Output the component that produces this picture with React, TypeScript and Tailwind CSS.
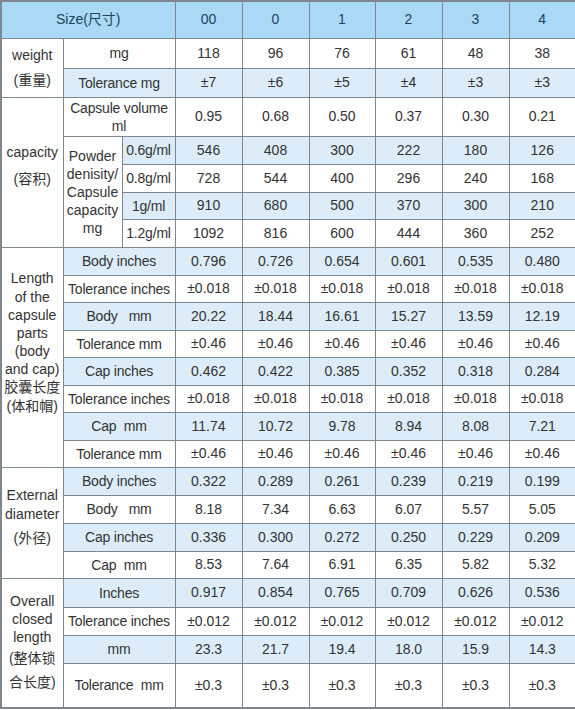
const BLUE = "bg-[#dcedf9]";
const HEAD = "bg-[#a9d9f4]";
const cell = "border border-[#7f878e] text-center align-middle p-0";

type Row = {
  label: string;
  vals: string[];
  blue: boolean;
  h: number;
  span2?: boolean;
  group?: { lines: [string, number][]; rows: number; pb?: number };
  sub?: { lines: string[]; rows: number };
};

function GroupLabel({ lines, pb }: { lines: [string, number][]; pb?: number }) {
  return (
    <div className="flex flex-col items-center" style={{ paddingBottom: pb ?? 0 }}>
      {lines.map(([t, lh], i) => (
        <span key={i} style={{ lineHeight: `${lh}px` }} className="whitespace-nowrap">
          {t}
        </span>
      ))}
    </div>
  );
}

const rows: Row[] = [
  { label: "mg", vals: ["118", "96", "76", "61", "48", "38"], blue: false, h: 30, span2: true, group: { lines: [["weight", 25], ["(重量)", 25]], rows: 2 } },
  { label: "Tolerance mg", vals: ["±7", "±6", "±5", "±4", "±3", "±3"], blue: true, h: 29, span2: true },
  { label: "Capsule volume\nml", vals: ["0.95", "0.68", "0.50", "0.37", "0.30", "0.21"], blue: false, h: 39, span2: true, group: { lines: [["capacity", 27], ["(容积)", 27]], rows: 5, pb: 12 } },
  { label: "0.6g/ml", vals: ["546", "408", "300", "222", "180", "126"], blue: true, h: 28, sub: { lines: ["Powder", "denisity/", "Capsule", "capacity", "mg"], rows: 4 } },
  { label: "0.8g/ml", vals: ["728", "544", "400", "296", "240", "168"], blue: false, h: 28 },
  { label: "1g/ml", vals: ["910", "680", "500", "370", "300", "210"], blue: true, h: 27 },
  { label: "1.2g/ml", vals: ["1092", "816", "600", "444", "360", "252"], blue: false, h: 28 },
  { label: "Body inches", vals: ["0.796", "0.726", "0.654", "0.601", "0.535", "0.480"], blue: true, h: 28, span2: true, group: { lines: [["Length", 19], ["of the", 18], ["capsule", 18], ["parts", 18], ["(body", 18], ["and cap)", 18], ["胶囊长度", 19], ["(体和帽)", 19]], rows: 8, pb: 30 } },
  { label: "Tolerance inches", vals: Array(6).fill("±0.018"), blue: false, h: 27, span2: true },
  { label: "Body   mm", vals: ["20.22", "18.44", "16.61", "15.27", "13.59", "12.19"], blue: true, h: 28, span2: true },
  { label: "Tolerance mm", vals: Array(6).fill("±0.46"), blue: false, h: 27, span2: true },
  { label: "Cap inches", vals: ["0.462", "0.422", "0.385", "0.352", "0.318", "0.284"], blue: true, h: 28, span2: true },
  { label: "Tolerance inches", vals: Array(6).fill("±0.018"), blue: false, h: 27, span2: true },
  { label: "Cap  mm", vals: ["11.74", "10.72", "9.78", "8.94", "8.08", "7.21"], blue: true, h: 28, span2: true },
  { label: "Tolerance mm", vals: Array(6).fill("±0.46"), blue: false, h: 27, span2: true },
  { label: "Body inches", vals: ["0.322", "0.289", "0.261", "0.239", "0.219", "0.199"], blue: true, h: 28, span2: true, group: { lines: [["External", 19], ["diameter", 19], ["(外径)", 28]], rows: 4, pb: 8 } },
  { label: "Body   mm", vals: ["8.18", "7.34", "6.63", "6.07", "5.57", "5.05"], blue: false, h: 28, span2: true },
  { label: "Cap inches", vals: ["0.336", "0.300", "0.272", "0.250", "0.229", "0.209"], blue: true, h: 28, span2: true },
  { label: "Cap  mm", vals: ["8.53", "7.64", "6.91", "6.35", "5.82", "5.32"], blue: false, h: 27, span2: true },
  { label: "Inches", vals: ["0.917", "0.854", "0.765", "0.709", "0.626", "0.536"], blue: true, h: 29, span2: true, group: { lines: [["Overall", 18], ["closed", 18], ["length", 18], ["(整体锁", 24], ["合长度)", 24]], rows: 4 } },
  { label: "Tolerance inches", vals: Array(6).fill("±0.012"), blue: false, h: 28, span2: true },
  { label: "mm", vals: ["23.3", "21.7", "19.4", "18.0", "15.9", "14.3"], blue: true, h: 28, span2: true },
  { label: "Tolerance  mm", vals: Array(6).fill("±0.3"), blue: false, h: 45, span2: true },
];

export default function App() {
  return (
    <div className="w-[575px] h-[710px] bg-white" style={{ fontFamily: '"Liberation Sans", Arial, "Noto Sans CJK SC", sans-serif' }}>
      <table className="table-fixed border-collapse border-2 border-[#7f878e] text-[14px] text-[#333] w-[575px]">
        <colgroup>
          <col className="w-[62px]" />
          <col className="w-[59px]" />
          <col className="w-[53px]" />
          <col className="w-[67px]" />
          <col className="w-[67px]" />
          <col className="w-[66px]" />
          <col className="w-[67px]" />
          <col className="w-[67px]" />
          <col className="w-[67px]" />
        </colgroup>
        <tbody>
          <tr className={`h-[37px] ${HEAD} text-[#23425f]`}>
            <td colSpan={3} className={cell}>Size(尺寸)</td>
            {["00", "0", "1", "2", "3", "4"].map((s) => (
              <td key={s} className={cell}>{s}</td>
            ))}
          </tr>
          {rows.map((r, i) => (
            <tr key={i} style={{ height: r.h }}>
              {r.group && (
                <td rowSpan={r.group.rows} className={`${cell} bg-white`}>
                  <GroupLabel lines={r.group.lines} pb={r.group.pb} />
                </td>
              )}
              {r.sub && (
                <td rowSpan={r.sub.rows} className={`${cell} bg-white leading-[18px]`}>
                  {r.sub.lines.map((l) => (
                    <div key={l}>{l}</div>
                  ))}
                </td>
              )}
              <td
                colSpan={r.span2 ? 2 : 1}
                className={`${cell} ${r.blue ? BLUE : "bg-white"} whitespace-pre leading-[18px] tracking-[-0.2px]`}
              >
                {r.label}
              </td>
              {r.vals.map((v, j) => (
                <td key={j} className={`${cell} ${r.blue ? BLUE : "bg-white"}`}>
                  {v}
                </td>
              ))}
            </tr>
          ))}
        </tbody>
      </table>
    </div>
  );
}
